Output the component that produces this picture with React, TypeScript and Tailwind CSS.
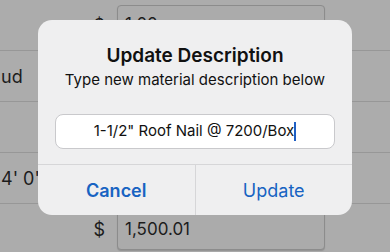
import React from 'react';

const Row: React.FC<{ children?: React.ReactNode; last?: boolean }> = ({ children, last }) => (
    <div className={`relative h-[51px] flex items-center ${last ? '' : 'border-b border-[#979797]'}`}>
        {children}
    </div>
);

const PriceBox: React.FC<{ value: string }> = ({ value }) => (
    <div className="flex items-center h-full">
        <span className="w-[117px] pr-[12px] text-right text-[18px] text-[#1c1c1c]">$</span>
        <div className="w-[208px] h-[41px] border border-[#8c8c8c] rounded-[4px] bg-[#ababab] flex items-center pl-[7px] text-[17px] text-[#1c1c1c] shadow-[0_1px_1px_rgba(0,0,0,0.15)]">
            {value}
        </div>
    </div>
);

export default function App() {
    return (
        <div className="relative w-[390px] h-[252px] overflow-hidden bg-[#acacac] font-['Inter',sans-serif]">

            {/* background form, dimmed */}
            <div className="flex flex-col">
                <Row><PriceBox value="1.00" /></Row>
                <Row>
                    <span className="pl-[1px] whitespace-nowrap text-[18px] text-[#1c1c1c]">ud</span>
                </Row>
                <Row />
                <Row>
                    <span className="pl-[1px] whitespace-nowrap text-[18px] text-[#1c1c1c]">4' 0"</span>
                </Row>
                <Row last><PriceBox value="1,500.01" /></Row>
            </div>

            {/* alert */}
            <div className="absolute left-[38px] top-[20px] w-[314px] h-[195px] rounded-[14px] bg-[#efeff0] flex flex-col">
                <p className="pt-[24px] text-center text-[19px] leading-[24px] font-semibold text-[#111]">Update Description</p>
                <p className="mt-[2px] text-center text-[15px] leading-[20px] text-[#111]">Type new material description below</p>

                <div className="mx-[17px] mt-[24px] h-[35px] bg-white border border-[#c9c9cc] rounded-[8px] flex items-center justify-center text-[15px] text-[#111]">
                    <span>1-1/2" Roof Nail @ 7200/Box</span>
                    <span className="w-[2px] h-[19px] bg-[#1f5fc4]"></span>
                </div>

                <div className="mt-[15px] flex-1 flex border-t border-[#d6d6d8]">
                    <button className="flex-1 flex items-center justify-center text-[18px] font-semibold text-[#1763c2] border-r border-[#d6d6d8]">
                        Cancel
                    </button>
                    <button className="flex-1 flex items-center justify-center text-[18px] text-[#1763c2]">
                        Update
                    </button>
                </div>
            </div>

        </div>
    );
}
